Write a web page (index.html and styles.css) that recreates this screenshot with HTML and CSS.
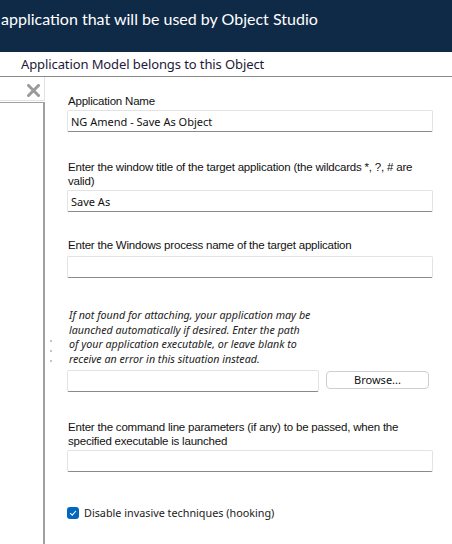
FILE: index.html
```html
<!DOCTYPE html>
<html lang="en">
<head>
    <meta charset="UTF-8">
    <title>Application Modeller - Wizard</title>
    <link rel="stylesheet" href="styles.css">
</head>
<body>

<div class="banner">application that will be used by Object Studio</div>
<div class="subbar">Application Model belongs to this Object</div>

<div class="workspace">
    <aside class="sidepane">
        <div class="sidehead">
            <svg class="close" width="13" height="13" viewBox="0 0 13 13">
                <path d="M1.5 1.5 L11.5 11.5 M11.5 1.5 L1.5 11.5" stroke="#9a9a9a" stroke-width="3" stroke-linecap="square"/>
            </svg>
        </div>
        <div class="sidelist"></div>
    </aside>

    <div class="splitter"><span></span><span></span><span></span></div>

    <form class="wizard">
        <div class="field f-name">
            <label>Application Name</label>
            <input type="text" value="NG Amend - Save As Object">
        </div>

        <div class="field f-title">
            <label>Enter the window title of the target application (the wildcards *, ?, # are valid)</label>
            <input type="text" value="Save As">
        </div>

        <div class="field f-proc">
            <label>Enter the Windows process name of the target application</label>
            <input type="text">
        </div>

        <div class="field f-path">
            <p class="hint">If not found for attaching, your application may be<br>launched automatically if desired. Enter the path<br>of your application executable, or leave blank to<br>receive an error in this situation instead.</p>
            <div class="pathrow">
                <input type="text">
                <button type="button">Browse...</button>
            </div>
        </div>

        <div class="field f-args">
            <label>Enter the command line parameters (if any) to be passed, when the specified executable is launched</label>
            <input type="text">
        </div>

        <label class="check">
            <span class="box">
                <svg width="12" height="12" viewBox="0 0 12 12"><path d="M3.2 6.2 L5.2 8.1 L8.9 4" fill="none" stroke="#fff" stroke-width="1.1"/></svg>
            </span>
            Disable invasive techniques (hooking)
        </label>
    </form>
</div>

</body>
</html>
```

FILE: styles.css
```css
body { margin: 0; background: #fff; font-family: "Liberation Sans", Arial, sans-serif; width: 452px; height: 544px; overflow: hidden; }

.banner { background: #0f2a47; color: #fff; height: 52px; box-sizing: border-box; padding: 8px 0 0 1px; font-family: Lato, "Noto Sans", sans-serif; font-size: 16px; line-height: 22px; white-space: nowrap; }
.subbar { height: 24px; line-height: 24px; border-bottom: 1px solid #8a8a8a; padding-left: 21px; font-family: "Noto Sans", sans-serif; font-size: 13px; color: #1e1a3a; letter-spacing: -0.1px; }

.workspace { display: flex; height: 467px; }

.sidepane { width: 45px; display: flex; flex-direction: column; }
.sidehead { height: 24px; border-right: 1px solid #e2e2e2; border-bottom: 1px solid #e2e2e2; display: flex; justify-content: flex-end; align-items: center; padding-right: 4px; box-sizing: border-box; }
.close { display: block; margin-top: 3px; }
.sidelist { flex: 1; border-top: 1px solid #a0a0a0; border-right: 2px solid #a0a0a0; margin-top: 1px; }

.splitter { width: 22px; display: flex; flex-direction: column; justify-content: center; gap: 8px; padding-left: 5px; box-sizing: border-box; padding-top: 80px; }
.splitter span { width: 2px; height: 2px; background: #c4c4c4; }

.wizard { width: 366px; padding-top: 17px; display: flex; flex-direction: column; }

.field { display: flex; flex-direction: column; gap: 2px; }
.field label { font-size: 11.5px; letter-spacing: -0.2px; line-height: 14px; color: #111; padding-left: 1px; }
.f-name { margin-bottom: 28px; }
.f-title { margin-bottom: 26px; }
.f-proc { margin-bottom: 30px; }
.f-proc label { margin-bottom: 2px; }
.f-path { margin-bottom: 28px; }
.f-args { margin-bottom: 33px; }

input { width: 100%; height: 22px; box-sizing: border-box; border: 1px solid #e3e3e3; border-bottom: 1px solid #8a8a8a; border-radius: 2px; padding: 0 3px 0 3px; font-family: "Noto Sans", sans-serif; font-size: 11px; color: #111; background: #fff; }

.hint { margin: 0 0 2px 2px; font-family: "Noto Sans", sans-serif; font-style: italic; font-size: 10.7px; line-height: 14.6px; color: #222; white-space: nowrap; }

.pathrow { display: flex; align-items: flex-start; gap: 7px; }
.pathrow input { width: 252px; flex: none; }
.pathrow button { width: 103px; height: 18px; margin-top: 1px; background: #fff; border: 1px solid #cfcfcf; border-radius: 4px; font-family: "Noto Sans", sans-serif; font-size: 11px; color: #111; padding: 0; line-height: 16px; }

.check { display: flex; align-items: center; gap: 5px; font-family: "Noto Sans", sans-serif; font-size: 10.8px; color: #1a1a1a; }
.box { width: 12px; height: 12px; background: #0067c0; border-radius: 3px; display: flex; }
```
